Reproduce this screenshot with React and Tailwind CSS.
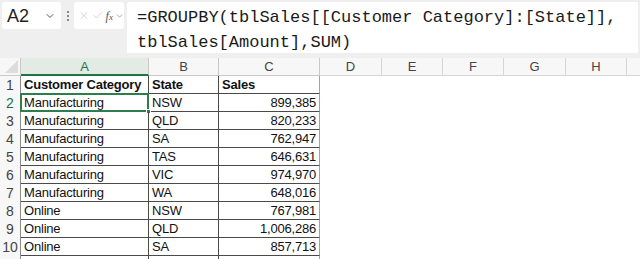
import { ChevronDown, X, Check } from "lucide-react";

const rows = [
  ["Manufacturing", "NSW", "899,385"],
  ["Manufacturing", "QLD", "820,233"],
  ["Manufacturing", "SA", "762,947"],
  ["Manufacturing", "TAS", "646,631"],
  ["Manufacturing", "VIC", "974,970"],
  ["Manufacturing", "WA", "648,016"],
  ["Online", "NSW", "767,981"],
  ["Online", "QLD", "1,006,286"],
  ["Online", "SA", "857,713"],
];

const extra = ["D", "E", "F", "G", "H"];
const extraW = ["w-[62px]", "w-[61px]", "w-[61px]", "w-[62px]", "w-[61px]"];

function FormulaBar() {
  return (
    <div className="flex h-[58px] items-start px-[2px] pt-[2px]">
      <div className="flex h-[27px] w-[59px] items-center justify-between rounded-[3px] bg-white px-[5px]">
        <span className="text-[18px] leading-none text-[#1f1f1f]">A2</span>
        <ChevronDown className="h-3 w-3 text-[#555]" strokeWidth={2} />
      </div>
      <div className="flex h-[27px] w-[13px] flex-col items-center justify-center gap-[2px]">
        <span className="h-[2px] w-[2px] rounded-full bg-[#666]" />
        <span className="h-[2px] w-[2px] rounded-full bg-[#666]" />
        <span className="h-[2px] w-[2px] rounded-full bg-[#666]" />
      </div>
      <div className="flex h-[27px] w-[50px] items-center gap-[2px] rounded-[3px] bg-white pl-[4px]">
        <X className="h-[13px] w-[13px] text-[#c4c4c4]" strokeWidth={1.5} />
        <Check className="h-[13px] w-[13px] text-[#c4c4c4]" strokeWidth={1.5} />
        <span className="font-['Liberation_Serif',serif] text-[12px] italic leading-none text-[#555]">
          f<span className="text-[9px]">x</span>
        </span>
        <ChevronDown className="h-[10px] w-[10px] text-[#888]" strokeWidth={2} />
      </div>
      <div className="ml-[3px] h-[51px] flex-1 rounded-tl-[3px] bg-white pl-[10px] pt-[3px] font-['Liberation_Mono',monospace] text-[17px] leading-[25px] text-[#1a1a1a]">
        <div>=GROUPBY(tblSales[[Customer Category]:[State]],</div>
        <div>tblSales[Amount],SUM)</div>
      </div>
    </div>
  );
}

function HeaderRow() {
  return (
    <div className="flex h-[18px] bg-[#f7f7f7] text-[13px] leading-none text-[#444]">
      <div className="relative w-[21px] border-b border-r border-[#c9c9c9]">
        <svg className="absolute bottom-[2px] right-[2px]" width="13" height="13" viewBox="0 0 13 13">
          <path d="M13 0 L13 13 L0 13 Z" fill="#dcdcdc" />
        </svg>
      </div>
      <div className="flex w-[128px] items-center justify-center border-b-2 border-r border-b-[#217346] border-r-[#c9c9c9] bg-[#e3ebe5] text-[#217346]">
        A
      </div>
      <div className="flex w-[70px] items-center justify-center border-b border-r border-[#c9c9c9]">B</div>
      <div className="flex w-[101px] items-center justify-center border-b border-r border-[#c9c9c9]">C</div>
      {extra.map((c, i) => (
        <div key={c} className={`flex ${extraW[i]} items-center justify-center border-b border-r border-[#d6d6d6]`}>
          {c}
        </div>
      ))}
      <div className="flex-1 border-b border-[#d6d6d6]" />
    </div>
  );
}

function Row({ n, cells, bold, selected }) {
  const cell = "flex items-center whitespace-nowrap border-b border-r border-[#4a4a4a] px-[3px]";
  return (
    <div className="flex h-[18px] text-[13px] leading-none tracking-[-0.2px] text-[#111]">
      <div
        className={`flex w-[21px] items-center justify-center border-r border-[#8a8a8a] bg-[#f7f7f7] text-[14px] tracking-normal ${
          selected ? "text-[#217346]" : "text-[#444]"
        }`}
      >
        {n}
      </div>
      <div className={`relative w-[128px] ${cell} ${bold ? "font-bold" : ""}`}>
        {cells[0]}
        {selected && (
          <>
            <div className="pointer-events-none absolute -left-[1px] -top-[1px] bottom-[-1px] right-[-1px] border-2 border-[#2e7d4f]" />
            <div className="absolute -bottom-[3px] -right-[3px] h-[5px] w-[5px] border border-white bg-[#2e7d4f]" />
          </>
        )}
      </div>
      <div className={`w-[70px] ${cell} ${bold ? "font-bold" : ""}`}>{cells[1]}</div>
      <div className={`w-[101px] ${cell} border-r-[#8ea6cc] ${bold ? "font-bold" : "justify-end"}`}>
        {cells[2]}
      </div>
      <div className="flex-1 bg-white" />
    </div>
  );
}

export default function App() {
  return (
    <div className="h-[259px] w-[640px] overflow-hidden bg-[#efefef] font-['Liberation_Sans',Arial,sans-serif]">
      <FormulaBar />
      <HeaderRow />
      <div className="bg-white">
        <Row n={1} cells={["Customer Category", "State", "Sales"]} bold />
        {rows.map((r, i) => (
          <Row key={i} n={i + 2} cells={r} selected={i === 0} />
        ))}
        <Row n="" cells={["", "", ""]} />
      </div>
    </div>
  );
}
